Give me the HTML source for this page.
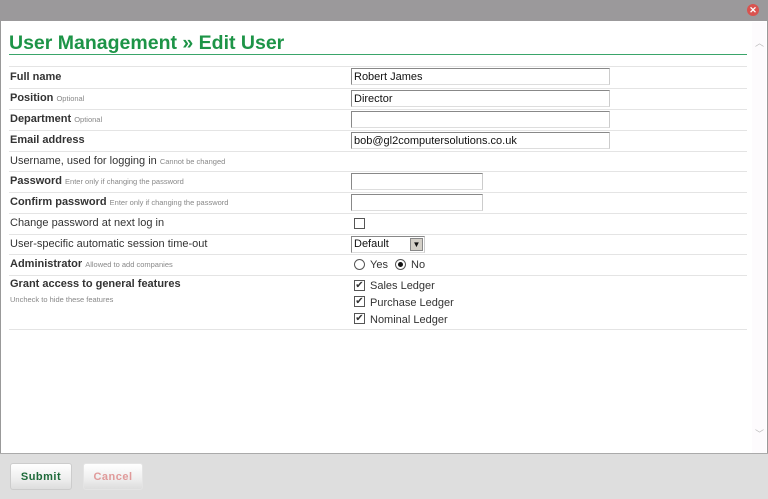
<!DOCTYPE html>
<html><head><style>
*{margin:0;padding:0;box-sizing:border-box}
body{width:768px;height:499px;overflow:hidden;background:#fff;font-family:"Liberation Sans",Arial,sans-serif;position:relative;color:#333}
.top{position:absolute;left:0;top:0;width:768px;height:21px;background:#9b999b}
.close{position:absolute;left:747px;top:4px;width:12px;height:12px;border-radius:50%;background:#d9534f;color:#fff;font-size:9px;line-height:12px;text-align:center;font-weight:bold}
.frame{position:absolute;left:0;top:21px;width:768px;height:433px;border-left:1px solid #999;border-right:1px solid #999}
.scroll{position:absolute;left:752px;top:22px;width:14px;height:431px;background:#fdfbfd}
h1{position:absolute;left:9px;top:32px;font-size:19.5px;color:#1d9447;font-weight:bold}
.hl{position:absolute;left:9px;top:54px;width:738px;height:1px;background:#3aa56a}
.line{position:absolute;left:9px;width:738px;height:1px;background:#e4e4e4}
.lab{position:absolute;left:10px;font-size:11px;color:#333}
.lab b{font-weight:bold}
.lab small{font-size:7.5px;color:#888}
.inp{position:absolute;left:351px;height:17px;border:1px solid #888;border-right-color:#ccc;border-bottom-color:#ddd;font-size:11px;padding:2px 2px 0;background:#fff;color:#111}
.cb{position:absolute;left:354px;width:11px;height:11px;border:1px solid #555;background:#fff;font-size:10px;line-height:9px;text-align:center}
.t{position:absolute;font-size:11px;color:#333}
.foot{position:absolute;left:0;top:453px;width:768px;height:46px;background:#dedede;border-top:1px solid #aaa}
.btn{position:absolute;top:463px;height:27px;border-radius:3px;border:1px solid #ccc;background:linear-gradient(#fff,#eee 60%,#ddd);font-size:11px;font-weight:bold;text-align:center;line-height:27px;letter-spacing:.5px}
</style></head><body>
<div class="top"></div><div class="close">✕</div>
<div class="frame"></div>
<div class="scroll"><div style="position:absolute;left:3px;top:14px;color:#bbb;font-size:9px">︿</div><div style="position:absolute;left:3px;top:405px;color:#bbb;font-size:9px">﹀</div></div>
<h1>User Management » Edit User</h1>
<div class="hl"></div>
<div class="line" style="top:66px"></div>
<div class="line" style="top:88px"></div>
<div class="line" style="top:109px"></div>
<div class="line" style="top:130px"></div>
<div class="line" style="top:151px"></div>
<div class="line" style="top:171px"></div>
<div class="line" style="top:192px"></div>
<div class="line" style="top:213px"></div>
<div class="line" style="top:234px"></div>
<div class="line" style="top:254px"></div>
<div class="line" style="top:275px"></div>
<div class="line" style="top:329px"></div>

<div class="lab" style="top:71px"><b>Full name</b></div>
<div class="lab" style="top:92px"><b>Position</b> <small>Optional</small></div>
<div class="lab" style="top:113px"><b>Department</b> <small>Optional</small></div>
<div class="lab" style="top:134px"><b>Email address</b></div>
<div class="lab" style="top:155px">Username, used for logging in <small>Cannot be changed</small></div>
<div class="lab" style="top:175px"><b>Password</b> <small>Enter only if changing the password</small></div>
<div class="lab" style="top:196px"><b>Confirm password</b> <small>Enter only if changing the password</small></div>
<div class="lab" style="top:217px">Change password at next log in</div>
<div class="lab" style="top:238px">User-specific automatic session time-out</div>
<div class="lab" style="top:258px"><b>Administrator</b> <small>Allowed to add companies</small></div>
<div class="lab" style="top:278px"><b>Grant access to general features</b></div>
<div class="lab" style="top:293px"><small>Uncheck to hide these features</small></div>

<div class="inp" style="top:68px;width:259px">Robert James</div>
<div class="inp" style="top:90px;width:259px">Director</div>
<div class="inp" style="top:111px;width:259px"></div>
<div class="inp" style="top:132px;width:259px">bob@gl2computersolutions.co.uk</div>
<div class="inp" style="top:173px;width:132px"></div>
<div class="inp" style="top:194px;width:132px"></div>
<div class="cb" style="top:218px"></div>
<div class="inp" style="top:236px;width:74px;padding:1px 2px 0">Default<span style="position:absolute;right:1px;top:1px;width:13px;height:13px;background:#d4d0c8;border:1px solid #888;font-size:8px;line-height:12px;text-align:center">▼</span></div>
<div style="position:absolute;left:354px;top:259px;width:11px;height:11px;border:1px solid #555;border-radius:50%"></div>
<div class="t" style="left:370px;top:259px">Yes</div>
<div style="position:absolute;left:395px;top:259px;width:11px;height:11px;border:1px solid #555;border-radius:50%"><div style="margin:2px;width:5px;height:5px;border-radius:50%;background:#111"></div></div>
<div class="t" style="left:411px;top:259px">No</div>
<div class="cb" style="top:280px">✔</div><div class="t" style="left:370px;top:280px">Sales Ledger</div>
<div class="cb" style="top:296px">✔</div><div class="t" style="left:370px;top:297px">Purchase Ledger</div>
<div class="cb" style="top:313px">✔</div><div class="t" style="left:370px;top:314px">Nominal Ledger</div>

<div class="foot"></div>
<div class="btn" style="left:10px;width:62px;color:#1e6a3a">Submit</div>
<div class="btn" style="left:83px;width:60px;color:#e09a9a;border-color:#e4e4e4">Cancel</div>
</body></html>
